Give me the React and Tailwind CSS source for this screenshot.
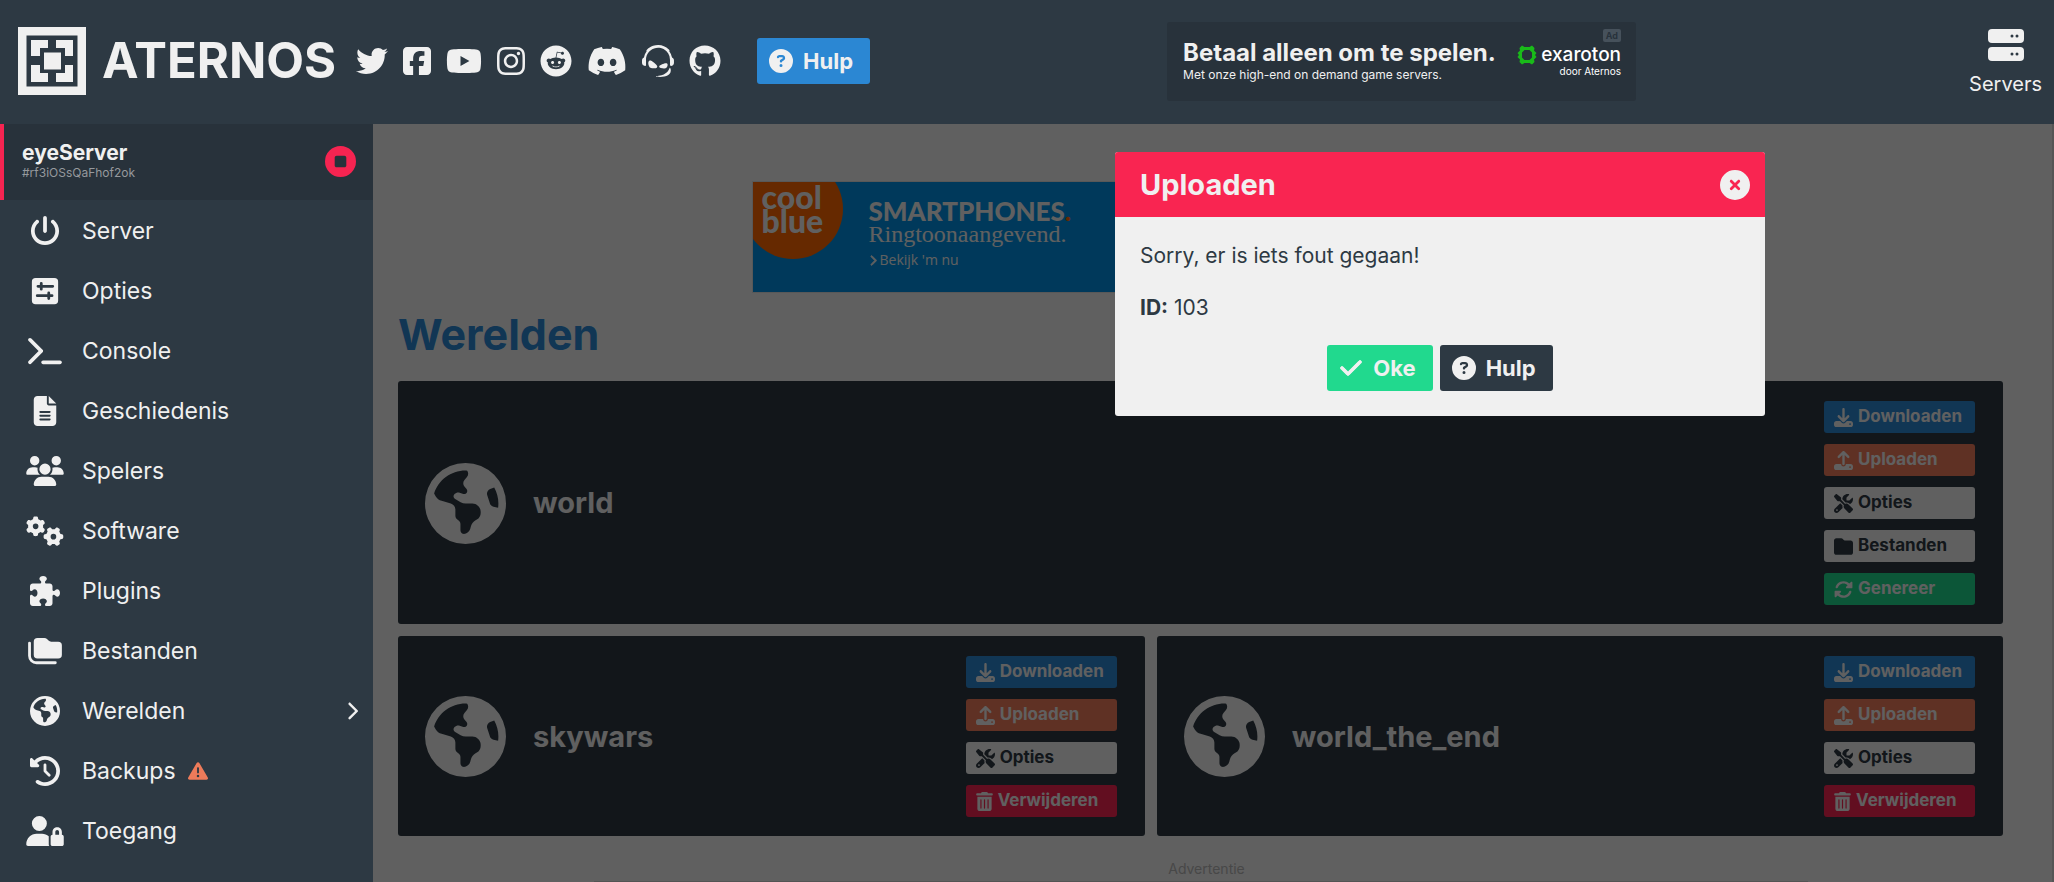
import { FaReddit, FaTeamspeak } from "react-icons/fa";
import {
  FaCircleQuestion,
  FaCircleStop,
  FaCircleXmark,
  FaCheck,
  FaChevronRight,
  FaClockRotateLeft,
  FaDiscord,
  FaDownload,
  FaEarthAmericas,
  FaFileLines,
  FaFolder,
  FaGears,
  FaGithub,
  FaInstagram,
  FaPowerOff,
  FaPuzzlePiece,
  FaRotate,
  FaScrewdriverWrench,
  FaSquareFacebook,
  FaTerminal,
  FaTrashCan,
  FaTriangleExclamation,
  FaTwitter,
  FaUpload,
  FaUserLock,
  FaUsers,
  FaYoutube,
} from "react-icons/fa6";

const SOCIALS = [
  { label: "Twitter", icon: FaTwitter, size: "h-8 w-8" },
  { label: "Facebook", icon: FaSquareFacebook, size: "h-8 w-7" },
  { label: "YouTube", icon: FaYoutube, size: "h-8 w-9" },
  { label: "Instagram", icon: FaInstagram, size: "h-8 w-7" },
  { label: "Reddit", icon: FaReddit, size: "h-8 w-8" },
  { label: "Discord", icon: FaDiscord, size: "h-8 w-10" },
  { label: "TeamSpeak", icon: FaTeamspeak, size: "h-8 w-8" },
  { label: "GitHub", icon: FaGithub, size: "h-8 w-8" },
];

const NAV_ITEMS = [
  { label: "Server", icon: FaPowerOff },
  { label: "Opties", icon: SlidersIcon },
  { label: "Console", icon: FaTerminal },
  { label: "Geschiedenis", icon: FaFileLines },
  { label: "Spelers", icon: FaUsers },
  { label: "Software", icon: FaGears },
  { label: "Plugins", icon: FaPuzzlePiece },
  { label: "Bestanden", icon: FoldersIcon },
  { label: "Werelden", icon: FaEarthAmericas, active: true },
  { label: "Backups", icon: FaClockRotateLeft, warning: true },
  { label: "Toegang", icon: FaUserLock },
];

const ACTIONS = {
  download: { label: "Downloaden", icon: FaDownload, color: "bg-[#2b87d3] text-[#f0f0f0]" },
  upload: { label: "Uploaden", icon: FaUpload, color: "bg-[#ed7b5a] text-[#f0f0f0]" },
  options: { label: "Opties", icon: FaScrewdriverWrench, color: "bg-[#f0f0f0] text-[#2d3943]" },
  files: { label: "Bestanden", icon: FaFolder, color: "bg-[#f0f0f0] text-[#2d3943]" },
  generate: { label: "Genereer", icon: FaRotate, color: "bg-[#1fd78d] text-[#f0f0f0]" },
  remove: { label: "Verwijderen", icon: FaTrashCan, narrow: true, color: "bg-[#f62451] text-[#f0f0f0]" },
};

const WORLDS = [
  { name: "world", wide: true, actions: ["download", "upload", "options", "files", "generate"] },
  { name: "skywars", actions: ["download", "upload", "options", "remove"] },
  { name: "world_the_end", actions: ["download", "upload", "options", "remove"] },
];

function SlidersIcon({ className }) {
  return (
    <svg viewBox="0 0 448 512" fill="currentColor" className={className}>
      <path
        fillRule="evenodd"
        d="M64 32h320a64 64 0 0 1 64 64v320a64 64 0 0 1-64 64H64a64 64 0 0 1-64-64V96a64 64 0 0 1 64-64zM160 104a24 24 0 0 0-24 24v24H104a24 24 0 0 0 0 48h32v24a24 24 0 0 0 48 0v-24h172a24 24 0 0 0 0-48H184v-24a24 24 0 0 0-24-24zM288 264a24 24 0 0 0-24 24v24H92a24 24 0 0 0 0 48h172v24a24 24 0 0 0 48 0v-24h32a24 24 0 0 0 0-48h-32v-24a24 24 0 0 0-24-24z"
      />
    </svg>
  );
}

function FoldersIcon({ className }) {
  return (
    <svg viewBox="0 0 576 512" fill="currentColor" className={className}>
      <path d="M96 96a64 64 0 0 1 64-64h117a64 64 0 0 1 45 19l26 26a64 64 0 0 0 45 19h119a64 64 0 0 1 64 64v160a64 64 0 0 1-64 64H160a64 64 0 0 1-64-64V96z" />
      <path d="M24 96a24 24 0 0 1 24 24v216c0 53 43 96 96 96h320a24 24 0 0 1 0 48H144A144 144 0 0 1 0 336V120a24 24 0 0 1 24-24z" />
    </svg>
  );
}

function ServersIcon({ className }) {
  return (
    <svg viewBox="0 0 36 32" className={className}>
      <rect width="36" height="14" rx="4" fill="#f0f0f0" />
      <rect y="18" width="36" height="14" rx="4" fill="#f0f0f0" />
      <g fill="#2d3943">
        <circle cx="24" cy="7" r="1.5" />
        <circle cx="29" cy="7" r="1.5" />
        <circle cx="24" cy="25" r="1.5" />
        <circle cx="29" cy="25" r="1.5" />
      </g>
    </svg>
  );
}

function AternosMark({ className }) {
  return (
    <svg viewBox="0 0 68 68" fill="#f0f0f0" className={className}>
      <path fillRule="evenodd" d="M0 0h68v68H0zM8.500 8.500v51h51v-51z" />
      <path d="M13 13h17v8h-8v8h-9zM38 13h17v16h-8v-8h-9zM13 38h9v8h8v9H13zM47 38h8v17H38v-9h9z" />
      <rect x="26" y="25.500" width="17" height="17" />
    </svg>
  );
}

function ExarotonMark({ className }) {
  return (
    <svg viewBox="0 0 20 20" className={className}>
      <path
        fill="#19ba19"
        fillRule="evenodd"
        d="M5 .5 7.500 2h5L15 .5 17.500 3l-.5 2.500L19.500 8 18 10l1.500 2-2.500 2.500.5 2.500-2.500 2.500-2.500-1.500h-5L5 19.500 2.500 17l.5-2.500L.5 12 2 10 .5 8 3 5.500 2.500 3zM7.500 5 5 7.500v5L7.500 15h5l2.500-2.500v-5L12.500 5z"
      />
    </svg>
  );
}

function Header() {
  return (
    <header className="flex h-[124px] items-center bg-[#2d3943] pb-[2px]">
      <a href="#home" className="ml-[18px] flex items-center gap-4">
        <AternosMark className="size-[68px]" />
        <span className="text-[49px] leading-[56px] font-bold">ATERNOS</span>
      </a>

      <div className="ml-5 flex items-center gap-[15px]">
        {SOCIALS.map((item) => {
          const Icon = item.icon;
          return (
            <a key={item.label} href="#social" aria-label={item.label}>
              <Icon className={item.size} />
            </a>
          );
        })}
      </div>

      <button className="ml-9 flex h-[46px] items-center gap-[10px] rounded-[3px] bg-[#2b87d3] pr-[17px] pl-3 text-[22px] font-bold">
        <FaCircleQuestion className="size-6" />
        Hulp
      </button>

      <a
        href="#exaroton"
        className="relative mr-auto ml-[297px] flex h-[79px] w-[469px] items-center justify-between rounded-[3px] bg-[#28323b] pr-[15px] pl-4"
      >
        <span>
          <span className="block text-[24px] leading-7 font-bold">Betaal alleen om te spelen.</span>
          <span className="block text-[12px] leading-4">Met onze high-end on demand game servers.</span>
        </span>
        <span className="text-right text-white">
          <span className="flex items-center gap-1 text-[19px] leading-5 font-medium">
            <ExarotonMark className="size-5" />
            exaroton
          </span>
          <span className="block text-[10px] leading-3">door Aternos</span>
        </span>
        <span className="absolute top-[7px] right-[15px] rounded-[2px] bg-[#46515b] px-[3px] text-[9px] leading-[13px] font-bold text-[#28323b]">
          Ad
        </span>
      </a>

      <a href="#servers" className="mr-3 flex flex-col items-center gap-[9px] pt-1 text-[20px] leading-7">
        <ServersIcon className="h-8 w-9" />
        Servers
      </a>
    </header>
  );
}

function Sidebar() {
  return (
    <aside className="w-[373px] shrink-0 bg-[#2d3943]">
      <div className="flex h-[76px] items-center justify-between border-l-4 border-[#f62451] bg-[#28323b] pr-[17px] pb-[2px] pl-[18px]">
        <div>
          <p className="text-[21px] leading-6 font-bold">eyeServer</p>
          <p className="text-[12px] leading-4 text-[#96999d]">#rf3iOSsQaFhof2ok</p>
        </div>
        <FaCircleStop className="size-[31px] text-[#f62451]" />
      </div>

      <nav className="pt-px">
        {NAV_ITEMS.map((item) => {
          const Icon = item.icon;
          return (
            <a key={item.label} href="#nav" className="flex h-[60px] items-center pr-[15px] pl-[26px] text-[23px]">
              <Icon className="h-[30px] w-[38px] shrink-0" />
              <span className="ml-[18px]">{item.label}</span>
              {item.warning && <FaTriangleExclamation className="ml-3 size-5 text-[#ed7b5a]" />}
              {item.active && <FaChevronRight className="ml-auto h-5 w-3" />}
            </a>
          );
        })}
      </nav>
    </aside>
  );
}

function Banner() {
  return (
    <a
      href="#coolblue"
      className="relative mx-auto flex h-[110px] w-[896px] bg-[#0090e3] text-[#f0f0f0] ring-1 ring-[#dcdcdc]"
    >
      <svg viewBox="0 0 90 110" className="absolute inset-y-0 left-0 h-full w-[90px]">
        <circle cx="40" cy="27" r="50" fill="#ff6600" />
      </svg>
      <span className="relative w-[90px] pt-[3px] pl-[9px] font-['Lato'] text-[32px] leading-6 font-black">
        cool
        <br />
        blue
      </span>
      <span className="ml-[26px] pt-4">
        <span className="block font-['Lato'] text-[26px] leading-[26px] font-black">
          SMARTPHONES<span className="text-[#ff6600]">.</span>
        </span>
        <span className="block font-['Liberation_Serif'] text-[24px] leading-5">Ringtoonaangevend.</span>
        <span className="mt-1 flex items-center gap-[3px] font-['Open_Sans'] text-[14px] leading-6">
          <FaChevronRight className="h-[11px] w-2 stroke-current stroke-[40px]" />
          Bekijk 'm nu
        </span>
      </span>
    </a>
  );
}

function WorldCard({ world }) {
  return (
    <section
      className={
        world.wide
          ? "col-span-2 flex items-center rounded-[3px] bg-[#2d3943] pt-5 pr-7 pb-[19px] pl-[27px] text-[#f0f0f0]"
          : "flex items-center rounded-[3px] bg-[#2d3943] pt-5 pr-7 pb-[19px] pl-[27px] text-[#f0f0f0]"
      }
    >
      <FaEarthAmericas className="size-[81px]" />
      <h2 className="ml-[27px] text-[29px] font-bold">{world.name}</h2>
      <div className="ml-auto flex w-[151px] flex-col gap-[11px]">
        {world.actions.map((key) => {
          const { label, icon: Icon, narrow, color } = ACTIONS[key];
          return (
            <button
              key={key}
              className={`flex h-8 items-center gap-[5px] rounded-[3px] px-[10px] text-[17px] font-bold ${color}`}
            >
              <Icon className={narrow ? "h-[19px] w-[17px] shrink-0" : "h-[19px] w-[19px] shrink-0"} />
              {label}
            </button>
          );
        })}
      </div>
    </section>
  );
}

function UploadDialog() {
  return (
    <div
      role="dialog"
      aria-labelledby="dialog-title"
      className="absolute top-7 right-[287px] w-[650px] overflow-hidden rounded-[3px] bg-[#f0f0f0] text-[#2d3943]"
    >
      <div className="flex h-[65px] items-center justify-between bg-[#f92551] pr-[15px] pl-[25px] text-[#f0f0f0]">
        <h2 id="dialog-title" className="text-[29px] font-bold">
          Uploaden
        </h2>
        <button aria-label="Sluiten">
          <FaCircleXmark className="size-[30px]" />
        </button>
      </div>
      <div className="px-[25px] pt-[26px] pb-[25px] text-[21px] leading-[26px]">
        <p>Sorry, er is iets fout gegaan!</p>
        <p className="mt-[26px]">
          <strong>ID:</strong> 103
        </p>
        <div className="mt-6 flex justify-center gap-[7px] text-[22px] font-bold text-[#f0f0f0]">
          <button className="flex h-[46px] items-center gap-[10px] rounded-[3px] bg-[#21d98e] pr-[17px] pl-3">
            <FaCheck className="size-6 stroke-current stroke-[20px]" />
            Oke
          </button>
          <button className="flex h-[46px] items-center gap-[10px] rounded-[3px] bg-[#2d3943] pr-[17px] pl-3">
            <FaCircleQuestion className="size-6" />
            Hulp
          </button>
        </div>
      </div>
    </div>
  );
}

export default function App() {
  return (
    <div className="flex h-screen flex-col overflow-hidden font-['Inter',sans-serif] text-[#f0f0f0]">
      <Header />
      <div className="flex min-h-0 flex-1">
        <Sidebar />
        <main className="relative min-w-0 flex-1 overflow-hidden border-r-2 border-[#555555] bg-[#f0f0f0]">
          <div className="pt-[58px] pr-[49px] pl-[25px]">
            <Banner />
            <h1 className="mt-[14px] text-[43px] leading-[56px] font-bold text-[#2b87d3]">Werelden</h1>
            <div className="mt-[19px] grid grid-cols-[15fr_17fr] gap-3">
              {WORLDS.map((world) => (
                <WorldCard key={world.name} world={world} />
              ))}
            </div>
            <p className="mt-[23px] pl-3 text-center text-[14px] leading-5 text-[#b4b4b4]">Advertentie</p>
            <div className="mx-auto mt-[2px] h-5 w-[1214px] border-t border-[#d0d0d0]" />
          </div>
          <div className="absolute inset-0 bg-black/60" />
          <UploadDialog />
        </main>
      </div>
    </div>
  );
}
